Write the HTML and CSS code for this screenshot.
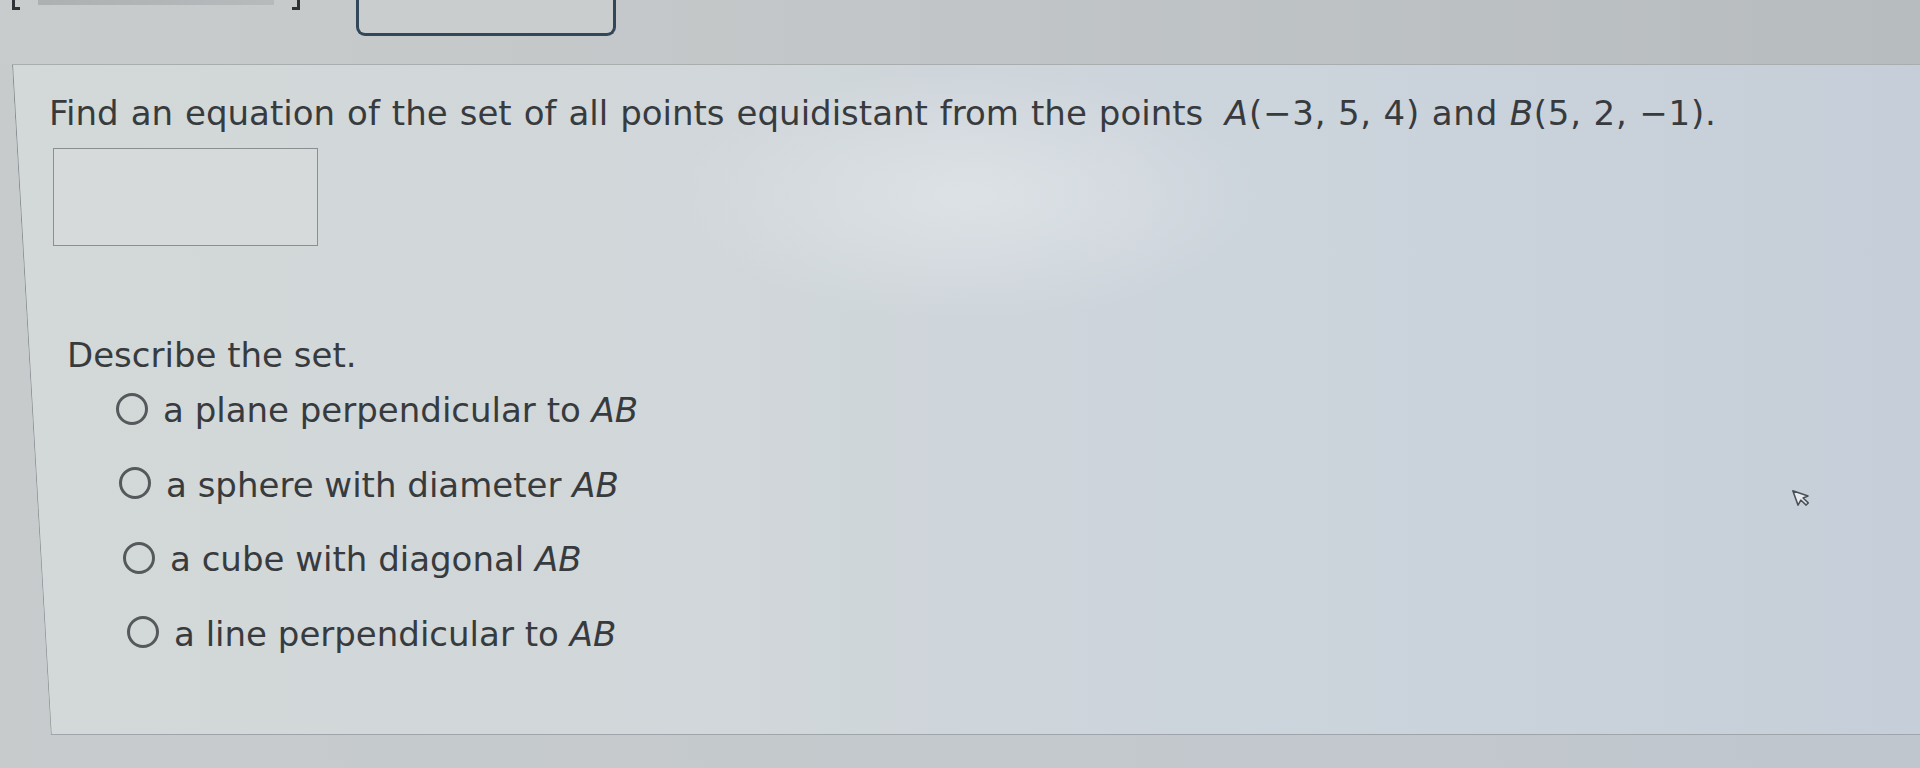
FILE: index.html
```html
<!DOCTYPE html>
<html lang="en">
<head>
<meta charset="utf-8">
<title>Equidistant points</title>
<link rel="stylesheet" href="styles.css">
</head>
<body>
<div class="topbar">
  <div class="bracket-btn">
    <span class="br br-left"></span>
    <span class="br-text"></span>
    <span class="br br-right"></span>
  </div>
  <div class="top-answer"></div>
</div>
<div class="panel">
  <p class="question"><span class="words">Find an equation of the set of all points equidistant from the points</span>&nbsp; <span class="math"><i>A</i>(−3, 5, 4) and <i>B</i>(5, 2, −1).</span></p>
  <div class="answer-box"></div>
  <p class="describe">Describe the set.</p>
  <ul class="options">
    <li class="option"><span class="radio"></span><span>a plane perpendicular to <i>AB</i></span></li>
    <li class="option"><span class="radio"></span><span>a sphere with diameter <i>AB</i></span></li>
    <li class="option"><span class="radio"></span><span>a cube with diagonal <i>AB</i></span></li>
    <li class="option"><span class="radio"></span><span>a line perpendicular to <i>AB</i></span></li>
  </ul>
</div>
<svg class="cursor" width="24" height="24" viewBox="0 0 22 22" aria-hidden="true">
  <path d="M3 3 L3 17 L7 13.5 L10 19.5 L12.5 18.3 L9.6 12.4 L14.5 12.2 Z" fill="#e8ecf0" stroke="#4a5158" stroke-width="1.4" stroke-linejoin="round"/>
</svg>
</body>
</html>
```
FILE: styles.css
```css
html, body {
  margin: 0;
  padding: 0;
}
body {
  width: 1920px;
  height: 768px;
  overflow: hidden;
  position: relative;
  font-family: "DejaVu Sans", Verdana, sans-serif;
  color: #383b3e;
  background: linear-gradient(90deg, #c7cbcc 0%, #c4c9cd 50%, #bfc6ce 100%);
}

.topbar {
  height: 64px;
  display: flex;
  align-items: flex-start;
  background: linear-gradient(90deg, #c8cccc 0%, #c2c6c8 45%, #b7bcbf 100%);
}
.bracket-btn {
  display: flex;
  align-items: flex-start;
  margin-left: 12px;
  width: 288px;
}
.br {
  display: block;
  width: 5px;
  height: 7px;
  border-bottom: 3px solid #2e3236;
}
.br-left { border-left: 3px solid #2e3236; }
.br-right { border-right: 3px solid #2e3236; }
.br-text {
  flex: 1;
  height: 5px;
  margin: 0 18px;
  background: linear-gradient(90deg, rgba(90,95,100,0.25), rgba(90,95,100,0.15));
}
.top-answer {
  margin-left: 56px;
  margin-top: -6px;
  width: 254px;
  height: 39px;
  border: 3px solid #33475a;
  border-top: none;
  border-radius: 0 0 9px 9px;
  background: #c9cdce;
}

.panel {
  position: relative;
  margin-left: 12px;
  height: 671px;
  border-top: 1px solid #a9adae;
  border-bottom: 1px solid #9fa5aa;
  padding-left: 37px;
  box-sizing: border-box;
  clip-path: polygon(0 0, 100% 0, 100% 100%, 39px 100%);
  background:
    radial-gradient(ellipse 420px 180px at 960px 130px, rgba(235,238,240,0.5), rgba(235,238,240,0) 70%),
    linear-gradient(90deg, #d3d8d8 0%, #d1d7da 35%, #ccd4dc 65%, #c6cfd9 100%);
}
.panel::before {
  content: "";
  position: absolute;
  left: 0;
  top: 0;
  width: 1px;
  height: 100%;
  background: #858b8e;
  transform-origin: top left;
  transform: skewX(3.3deg);
}

.question {
  margin: 28px 0 0;
  font-size: 34px;
  line-height: 40px;
  white-space: nowrap;
}
.question .words {
  word-spacing: 1.2px;
}
.question .math {
  letter-spacing: 0.8px;
}
.answer-box {
  margin: 15px 0 0 4px;
  width: 263px;
  height: 96px;
  border: 1px solid #8b8f91;
  background: #d6dadb;
}
.describe {
  margin: 89px 0 0 18px;
  font-size: 34px;
  line-height: 40px;
}
.options {
  list-style: none;
  margin: 15px 0 0;
  padding: 0 0 0 67px;
  display: flex;
  flex-direction: column;
  gap: 34.5px;
}
.option {
  display: flex;
  align-items: center;
  gap: 15px;
  font-size: 34px;
  line-height: 40px;
}
.option:nth-child(2) { padding-left: 3px; }
.option:nth-child(3) { padding-left: 7px; }
.option:nth-child(4) { padding-left: 11px; }
.radio {
  width: 26px;
  height: 26px;
  border: 3px solid #56595c;
  border-radius: 50%;
  flex: none;
  margin-top: -3px;
}

.cursor {
  position: absolute;
  left: 1792px;
  top: 484px;
  transform: rotate(-20deg);
}
```
